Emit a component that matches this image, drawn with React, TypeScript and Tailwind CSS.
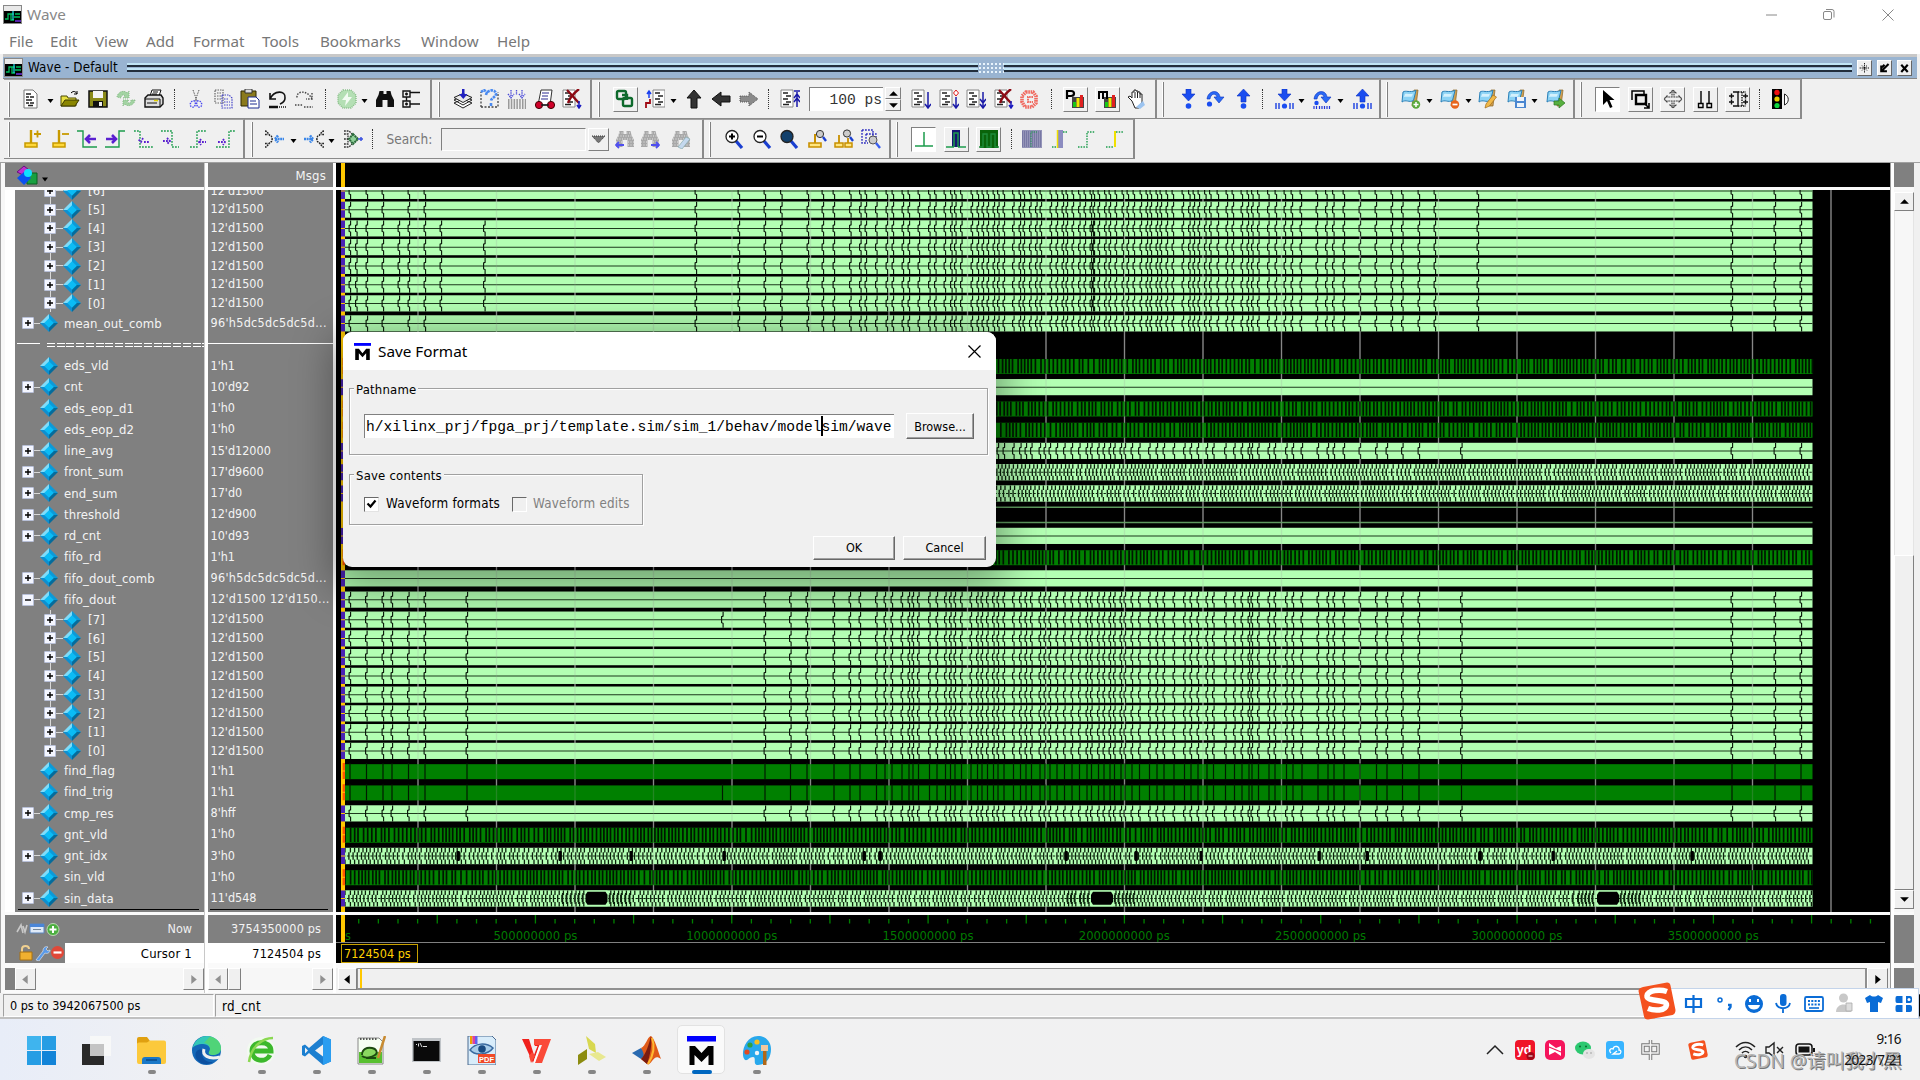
import React from "react";

/* ---------- signal data ---------- */

type Kind = "bus" | "dense" | "bit" | "bitOn" | "plain" | "thr" | "div" | "idx" | "sine";
type Row = {
  name: string;
  value: string;
  depth: 0 | 1;
  toggle?: "+" | "-";
  kind: Kind;
  set?: "A" | "A2" | "B" | "B2" | "M";
};

const child = (n: number, set: Row["set"]): Row => ({
  name: `[${n}]`,
  value: "12'd1500",
  depth: 1,
  toggle: "+",
  kind: "bus",
  set,
});

const ROWS: Row[] = [
  child(6, "A"),
  child(5, "A"),
  child(4, "A2"),
  child(3, "A2"),
  child(2, "A2"),
  child(1, "A2"),
  child(0, "A2"),
  { name: "mean_out_comb", value: "96'h5dc5dc5dc5d...", depth: 0, toggle: "+", kind: "bus", set: "A" },
  { name: "", value: "", depth: 0, kind: "div" },
  { name: "eds_vld", value: "1'h1", depth: 0, kind: "bitOn" },
  { name: "cnt", value: "10'd92", depth: 0, toggle: "+", kind: "plain" },
  { name: "eds_eop_d1", value: "1'h0", depth: 0, kind: "bit" },
  { name: "eds_eop_d2", value: "1'h0", depth: 0, kind: "bit" },
  { name: "line_avg", value: "15'd12000", depth: 0, toggle: "+", kind: "bus", set: "M" },
  { name: "front_sum", value: "17'd9600", depth: 0, toggle: "+", kind: "dense" },
  { name: "end_sum", value: "17'd0", depth: 0, toggle: "+", kind: "dense" },
  { name: "threshold", value: "12'd900", depth: 0, toggle: "+", kind: "thr" },
  { name: "rd_cnt", value: "10'd93", depth: 0, toggle: "+", kind: "plain" },
  { name: "fifo_rd", value: "1'h1", depth: 0, kind: "bitOn" },
  { name: "fifo_dout_comb", value: "96'h5dc5dc5dc5d...", depth: 0, toggle: "+", kind: "plain" },
  { name: "fifo_dout", value: "12'd1500 12'd150...", depth: 0, toggle: "-", kind: "bus", set: "B" },
  child(7, "B2"),
  child(6, "B"),
  child(5, "B"),
  child(4, "B"),
  child(3, "B"),
  child(2, "B"),
  child(1, "B"),
  child(0, "B"),
  { name: "find_flag", value: "1'h1", depth: 0, kind: "bitOn", set: "B" },
  { name: "find_trig", value: "1'h1", depth: 0, kind: "bitOn", set: "B2" },
  { name: "cmp_res", value: "8'hff", depth: 0, toggle: "+", kind: "bus", set: "B" },
  { name: "gnt_vld", value: "1'h0", depth: 0, kind: "bit" },
  { name: "gnt_idx", value: "3'h0", depth: 0, toggle: "+", kind: "idx" },
  { name: "sin_vld", value: "1'h0", depth: 0, kind: "bit" },
  { name: "sin_data", value: "11'd548", depth: 0, toggle: "+", kind: "sine" },
];

const A = [
  350, 367, 383, 409, 425, 696, 739, 765, 781.5, 808, 823, 834, 850.5, 860.5, 866, 876.5, 887, 893, 903, 909, 919,
  929.5, 935.5, 945, 951.5, 955.5, 961.5, 972, 978, 983, 988, 994, 998.5, 1004, 1013.5, 1020, 1024, 1030.5, 1036.5,
  1041, 1051, 1057, 1063, 1067, 1073, 1079.5, 1085, 1091, 1094, 1099, 1105.5, 1110, 1116, 1123, 1128, 1134, 1141, 1147,
  1151, 1157, 1161, 1167, 1173, 1183, 1189.5, 1194, 1199, 1205.5, 1210.5, 1218, 1227, 1233, 1242, 1248, 1252.5, 1258.5,
  1268.5, 1276, 1285, 1292, 1301, 1317, 1326.5, 1333.5, 1344, 1360, 1376, 1392, 1402.5, 1419, 1435, 1478, 1732, 1775,
  1801,
];
const B = [
  350, 366.5, 383, 392, 408.5, 425, 467, 765, 790.5, 807, 834, 850, 860, 876.5, 885, 892, 902, 909, 913, 918.5, 929.5,
  937, 945.5, 950.5, 955, 961.5, 971, 977.5, 982, 987.5, 993.5, 998, 1004, 1013.5, 1020.5, 1026, 1031.5, 1040, 1045,
  1050, 1057, 1064.5, 1072, 1079.5, 1087, 1091.5, 1098.5, 1104, 1110, 1114.5, 1121, 1125, 1132, 1139.5, 1149.5, 1157,
  1164, 1174, 1184.5, 1191, 1198, 1207, 1213.5, 1225.5, 1234.5, 1242, 1249, 1252, 1258.5, 1269, 1275, 1286.5, 1293,
  1302, 1318, 1328, 1334, 1344, 1360, 1376.5, 1387, 1402.5, 1419, 1461.5, 1732, 1775, 1801,
];
const SETS: Record<string, number[]> = {
  A,
  A2: [...A, 356.5, 399, 441, 484.5, 1093],
  B,
  B2: [...B, 722.5],
  M: B,
};

const TOP = 190;
const FIRST = 181.6;
const END = 1812.5;
const START = 343;

const LAYOUT = (() => {
  let y = FIRST;
  return ROWS.map((r) => {
    const h = r.depth === 1 ? 18.75 : 21.25;
    const c = y + h / 2;
    y += h;
    return { row: r, c };
  });
})();

const LIGHT = "#b3ffb3";
const T = "font-['DejaVu_Sans_Condensed','Noto_Sans',sans-serif]";

function rand(seed: number) {
  let s = seed;
  return () => {
    s = (s * 16807) % 2147483647;
    return s / 2147483647;
  };
}

/* ---------- waveform drawing ---------- */

function busPath(xs: number[], c: number) {
  return xs
    .map((x) => `M${x + 0.6} ${c - 8}V${c - 3.6}L${x - 0.9} ${c - 3}V${c + 3}L${x + 0.6} ${c + 3.6}V${c + 8}`)
    .join("");
}

function Trace({ row, c, i }: { row: Row; c: number; i: number }) {
  const w = END - START;
  if (row.kind === "div") return null;
  if (row.kind === "thr")
    return <path d={`M${START} ${c - 7.6}H${END}M${START} ${c + 7.8}H${END}`} stroke="#5f9a5f" strokeWidth="1.5" />;
  if (row.kind === "plain" || row.kind === "bus")
    return (
      <g>
        <rect x={START} y={c - 8.2} width={w} height={16.2} fill={LIGHT} />
        <path d={`M${START} ${c}H${END}`} stroke="#1d3a1d" strokeWidth="1.2" />
        {row.kind === "bus" && <path d={busPath(SETS[row.set!], c)} stroke="#061206" strokeWidth="1.1" fill="none" />}
      </g>
    );
  const rnd = rand(97 + i * 131);
  if (row.kind === "bit" || row.kind === "bitOn") {
    if (row.set)
      return (
        <g>
          <rect x={START} y={c - 6.8} width={w} height={15} fill="#008000" />
          <path d={SETS[row.set].map((x) => `M${x} ${c - 8}v16.2`).join("")} stroke="#001a00" strokeWidth="1.2" />
        </g>
      );
    let d = "";
    for (let x = START + 2; x < END; x += rnd() < 0.12 ? 5.6 : rnd() < 0.5 ? 3.3 : 4.1)
      d += `M${x.toFixed(1)} ${c - 7}v14.2`;
    return (
      <g>
        <rect x={START} y={c - 7} width={w} height={15} fill="#008000" />
        <path d={d} stroke="#001400" strokeWidth="1.7" />
      </g>
    );
  }
  let d = "";
  let m = "";
  const blobs = [596.5, 1102, 1608];
  const idxBlobs = [458, 560, 631, 724, 864, 880, 1066, 1136, 1201, 1319, 1367, 1480, 1553, 1692];
  for (let x = START + 2; x < END; x += rnd() < 0.14 ? 5.4 : rnd() < 0.5 ? 3.6 : 4.2) {
    const near = row.kind === "sine" ? Math.min(...blobs.map((b) => Math.abs(b - x))) : 99;
    if (near < 11) continue;
    d += `M${x.toFixed(1)} ${c - 8}v4.4M${x.toFixed(1)} ${c + 3.6}v4.4`;
    m += `M${(x - 1.5).toFixed(1)} ${c - 3.8}v7.6`;
    if (near < 36) m += `M${(x - 0.8).toFixed(1)} ${c - 5.5}v11`;
  }
  return (
    <g>
      <rect x={START} y={c - 8.2} width={w} height={16.4} fill={LIGHT} />
      <path d={d} stroke="#0a1f0a" strokeWidth="1.3" />
      <path d={m} stroke="#0a1f0a" strokeWidth="1.3" />
      <path d={`M${START} ${c}H${END}`} stroke="#0f280f" strokeWidth="1.2" strokeDasharray="2.4 1.5" />
      {row.kind === "sine" &&
        blobs.map((b) => (
          <g key={b}>
            <rect x={b - 11} y={c - 8} width="22" height="15.8" fill={LIGHT} />
            <path d={`M${b - 9} ${c - 6.8}h18l2 3v7l-2 3h-18l-2 -3v-7z`} fill="#000" />
          </g>
        ))}
      {row.kind === "idx" &&
        idxBlobs.map((b) => <rect key={b} x={b - 1.5} y={c - 5} width="3.4" height="10" rx="1" fill="#000" />)}
    </g>
  );
}

function WaveCanvas() {
  const grid = Array.from({ length: 19 }, (_, i) => 418 + i * 78.5);
  return (
    <svg className="block h-[722px] w-[1554px] bg-black" viewBox={`336 ${TOP} 1554 722`}>
      <path d={grid.map((x) => `M${x} 190V912`).join("")} stroke="#808080" strokeWidth="1.3" />
      {LAYOUT.map(({ row, c }, i) => (
        <Trace key={i} row={row} c={c} i={i} />
      ))}
      <path d={grid.map((x) => `M${x} 190V912`).join("")} stroke="#a0a0a0" strokeWidth="1.3" opacity="0.22" />
      <rect x="341" y="190" width="4" height="722" fill="#ffc800" />
      {LAYOUT.map(({ row, c }, i) => {
        if (row.kind === "div" || row.kind === "thr") return null;
        const bit = row.kind.startsWith("bit");
        return (
          <rect
            key={i}
            x={bit ? 342.6 : 341}
            y={c - 8}
            width={bit ? 2.4 : 4}
            height="16"
            fill={bit ? "#ff5500" : "#4a23b4"}
          />
        );
      })}
      <path
        d={LAYOUT.filter((l) => l.row.kind !== "div")
          .map(({ c }) => `M341 ${c}h4`)
          .join("")}
        stroke="#ffc800"
        strokeWidth="1.2"
      />
    </svg>
  );
}

function Ruler() {
  const ticks = Array.from({ length: 78 }, (_, i) => i + 1);
  return (
    <svg className="block h-[28px] w-[1554px] bg-black" viewBox="336 915 1554 28">
      <path
        d={ticks.map((i) => `M${339.1 + i * 19.633} ${i % 5 === 0 ? 915 : 919}V923.5`).join("")}
        stroke="#008000"
        strokeWidth="1.3"
      />
      <g className={T} fill="#007a00" fontSize="12.5" textAnchor="middle">
        <text x="348" y="939.5">
          s
        </text>
        {[1, 2, 3, 4, 5, 6, 7].map((k) => (
          <text key={k} x={339.1 + k * 196.3} y="939.5" textLength={k === 1 ? 84 : 91} lengthAdjust="spacingAndGlyphs">
            {k * 500000000} ps
          </text>
        ))}
      </g>
      <rect x="341" y="915" width="4" height="28" fill="#ffc800" />
      <rect x="336" y="942" width="1549" height="1" fill="#808080" />
    </svg>
  );
}

/* ---------- small parts ---------- */

const raised = "border border-t-white border-l-white border-r-[#808080] border-b-[#808080] bg-[#f0f0f0]";

function Diamond() {
  return (
    <svg className="block h-[18px] w-[18px] shrink-0" viewBox="0 0 18 18">
      <path d="M9 0L18 9L9 9Z" fill="#0c9ad8" />
      <path d="M9 0L0 9L9 9Z" fill="#7fdcfa" />
      <path d="M0 9L9 18V9Z" fill="#0e8fd0" />
      <path d="M18 9L9 18V9Z" fill="#056c9c" />
      <path d="M9 4.2L13.8 9L9 13.8L4.2 9Z" fill="#0bbcf5" />
    </svg>
  );
}

function Toggle({ s }: { s?: string }) {
  if (!s) return <span className="w-[12px] shrink-0" />;
  return (
    <span className="flex h-[12px] w-[12px] shrink-0 items-center justify-center rounded-[1px] border border-[#b8c0d8] bg-[#f4f6ff]">
      <svg className="h-[8px] w-[8px]" viewBox="0 0 8 8">
        <path d={s === "+" ? "M1 4H7M4 1V7" : "M1 4H7"} stroke="#000" strokeWidth="1.4" />
      </svg>
    </span>
  );
}

function Sep({ h }: { h: string }) {
  return <div className={`${h} shrink-0 bg-[#fafafa]`} />;
}

function ArrowBtn({ dir, dim, cls }: { dir: "l" | "r" | "u" | "d"; dim?: boolean; cls: string }) {
  const p = { l: "M7 1L2 5L7 9Z", r: "M3 1L8 5L3 9Z", u: "M1 7L5 3L9 7Z", d: "M1 3L5 7L9 3Z" }[dir];
  return (
    <div className={`flex shrink-0 items-center justify-center ${raised} ${cls}`}>
      <svg className="h-[11px] w-[11px] shrink-0" viewBox="0 0 10 10">
        <path d={p} fill={dim ? "#909090" : "#000"} />
      </svg>
    </div>
  );
}

/* ---------- toolbar icons ---------- */

const doc = (
  <g>
    <path d="M3 1h9l4 4v14H3z" fill="#fff" stroke="#777" />
    <path d="M5 5h5M5 8h3M9 8h4M5 11h6M5 14h3M9 14h4M7 16.5h5" stroke="#222" strokeWidth="1.3" />
  </g>
);
const docS = (
  <g>
    <path d="M1 1h12v17H1z" fill="#fff" stroke="#888" />
    <path d="M3 4h5M6 7h5M3 10h5M6 13h5M3 15.5h6" stroke="#222" strokeWidth="1.4" />
  </g>
);
const flag = (
  <g>
    <path d="M13 1h4l-2 16h-4z" fill="#d0a050" stroke="#8a6424" strokeWidth="0.7" />
    <path d="M2 3C5 1 8 4 15 1.500L12.500 11.500C8 14 5 10 1 13Z" fill="#8cd3f5" stroke="#2a80b8" />
    <path d="M4 5c3-1 5 1 8-0.500l-1 3c-3 1-5-0.500-8 0.500z" fill="#d4f1fd" />
  </g>
);
const bin = (c: string) => (
  <g fill={c}>
    <path d="M4.500 2h4v3h3V2h4l1 4l2.500 5v7h-6.500v-7h-5v7H1v-7l2.500-5z" />
    <path d="M8 6h4v5H8z" />
  </g>
);
const binDim = (
  <g>
    {bin("#a8a8a8")}
    <path d="M4 4h12M3 7h14M2 10h16M1 13h6M13 13h6M1 16h6M13 16h6" stroke="#e8e8e8" strokeDasharray="1 1.5" />
  </g>
);
const lens = (fill: string, sign: string) => (
  <g>
    <path d="M12 12L18 19" stroke="#1a3fd0" strokeWidth="3.2" />
    <circle cx="8" cy="7.5" r="6" fill={fill} stroke="#222" strokeWidth="1.3" />
    <path d={sign} stroke="#000" strokeWidth="2" />
  </g>
);
const blueDown = <path d="M8 0h5v5h4l-6.500 7L4 5h4z" fill="#1a4df0" stroke="#0a2fc0" strokeWidth="0.6" />;
const blueUp = <path d="M8 13h5V7h4L10.500 0L4 7h4z" fill="#1a4df0" stroke="#0a2fc0" strokeWidth="0.6" />;
const hop = (
  <path
    d="M2 10C3 1 14 0 15 8h4l-5 6l-5-6h3C11 4 6 4 5 10z"
    fill="#2a6af5"
    stroke="#0a2fc0"
    strokeWidth="0.6"
  />
);
const chk = (
  <path
    d="M2 17v3M4.500 17v3M10 17v3M7.500 17v3M12.500 17v3M15 17v3M17.500 17v3"
    stroke="#2238d8"
    strokeWidth="1.2"
  />
);
const bars = (
  <g>
    <path d="M7 8h12v11H7z" fill="#444" />
    <path d="M8 13h3v5H8z" fill="#18c818" />
    <path d="M11.500 9h3v9h-3z" fill="#f5e400" />
    <path d="M15 6h3v12h-3z" fill="#e02020" />
  </g>
);
const G = "#1c9c4c";
const P = "#5a20d0";

const I: Record<string, React.ReactNode> = {
  doc,
  open: (
    <g>
      <path d="M1 17V7h6l1 2h8v8z" fill="#e8e040" stroke="#4a4800" />
      <path d="M1 17L5 11h14l-4 6z" fill="#8a8600" stroke="#3a3800" />
      <path d="M11 4c3-3 5-1 6 1M17 5V2M17 5h-3" stroke="#000" fill="none" />
    </g>
  ),
  save: (
    <g>
      <path d="M1 2h18v16H1z" fill="#8a8a18" stroke="#111" strokeWidth="1.5" />
      <path d="M5 2h10v7H5z" fill="#f4f4f4" />
      <path d="M5 12h10v6H5z" fill="#111" />
      <path d="M11 13h3v4h-3z" fill="#eee" />
    </g>
  ),
  refresh: (
    <g fill="#a2d3a2" stroke="#86b986" strokeDasharray="1 1">
      <path d="M1 8C2 2 9 1 11 4l2-2v7H7l2-2C7 5 5 6 5 9z" />
      <path d="M19 11c-1 6-8 7-10 4l-2 2v-6h6l-2 2c2 2 4 1 4-2z" />
    </g>
  ),
  print: (
    <g>
      <path d="M6 7L8 1h9l-2 6" fill="#fff" stroke="#111" />
      <path d="M1 9l3-3h13l2 3v6l-3 3H1z" fill="#ddd" stroke="#111" strokeWidth="1.4" />
      <path d="M1 10h15v8M3 14h10M9 3h5M8 5h5" stroke="#111" fill="none" />
      <path d="M10 11.500h4" stroke="#e0d000" strokeWidth="1.500" />
    </g>
  ),
  cut: (
    <g fill="none">
      <path d="M7 1l4 11M13 1L9 12" stroke="#555" strokeDasharray="1.500 1" />
      <path
        d="M9 12c-5-1-6 5-3 6s4-3 3-6M11 12c5-1 6 5 3 6s-4-3-3-6"
        stroke="#4a4af0"
        strokeDasharray="1.500 1"
        strokeWidth="1.400"
      />
    </g>
  ),
  copy: (
    <g fill="none" strokeDasharray="1.500 1" strokeWidth="1.200">
      <path d="M2 1h8v13H2zM4 4h4M4 7h4M4 10h4" stroke="#666" />
      <path d="M9 6h7l3 3v10H9zM11 10h5M11 13h6M11 16h6" stroke="#4040c8" />
    </g>
  ),
  paste: (
    <g>
      <path d="M1 2h15v15H1z" fill="#8a7a1c" stroke="#2e2800" />
      <path d="M5 0h7v4H5z" fill="#ddd" stroke="#333" />
      <path d="M8 8h8l3 3v8H8z" fill="#fff" stroke="#1a2a90" />
      <path d="M10 12h6M10 15h7" stroke="#1a2a90" />
    </g>
  ),
  undo: (
    <g fill="none" stroke="#111" strokeWidth="1.600">
      <path d="M2 4v6h6M2 10C6 1 18 1 17 9c0 4-3 5-5 6" />
      <path d="M1 18h9" strokeWidth="2.500" />
      <path d="M11 18h8" strokeDasharray="1 1" />
    </g>
  ),
  redo: (
    <g fill="none" stroke="#444" strokeWidth="1.400" strokeDasharray="1.500 1.300">
      <path d="M18 4v6h-6M18 10C14 1 2 1 3 9M1 16h8M10 18h9" />
    </g>
  ),
  green: (
    <g>
      <path
        d="M6 1h8l5 5v8l-5 5H6l-5-5V6z"
        fill="#b4dfb4"
        stroke="#8cc08c"
        strokeWidth="1.500"
        strokeDasharray="1 1"
      />
      <path d="M11 3L5 11h4l-1 6l7-9h-4z" fill="#f2fbf2" />
    </g>
  ),
  bino: bin("#111"),
  tree: (
    <g fill="none" stroke="#111" strokeWidth="1.400">
      <path d="M2 2h7v6H2zM2 12h7v6H2zM9 3.500h10M9 15h10M5.500 3.500v3M4 5h3M5.500 13.500v3M4 15h3M5.500 8v4" />
    </g>
  ),
  compile: (
    <g>
      <path d="M1 14l9-4l9 4l-9 5zM1 11l9-4l9 4l-9 5z" fill="#fff" stroke="#222" />
      <path d="M1 8.500l9-4l9 4l-9 5z" fill="#e8e8e8" stroke="#222" />
      <path d="M9 0h2.500v5h3l-4.200 5L6 5h3z" fill="#2020c0" />
    </g>
  ),
  compile2: (
    <g fill="none">
      <path d="M1 18V3M1 18h17V3" stroke="#444" strokeWidth="1.300" strokeDasharray="2 1.500" />
      <path d="M1 3l3-2l4 3M6 6c1-6 10-6 10-1c0 3-5 4-5 7" stroke="#4a8af0" strokeWidth="2.600" strokeDasharray="2.500 0.800" />
      <path d="M11 14v3" stroke="#4a8af0" strokeWidth="2.600" />
    </g>
  ),
  compile3: (
    <g fill="none">
      <path
        d="M4 1v8M15 1v8M1 5l3 4l3-4M12 5l3 4l3-4M9.500 1v5"
        stroke="#4a4ad8"
        strokeWidth="1.300"
        strokeDasharray="1.500 0.800"
      />
      <path d="M1 11h18M1 13h18M1 15h18M1 17h18M1 19h18" stroke="#444" strokeDasharray="1.500 1.300" />
    </g>
  ),
  sim: (
    <g>
      <path d="M6 1h11l-2 15H3z" fill="#fff" stroke="#333" />
      <path d="M7 4h7M7 7h6M6 10h7" stroke="#2a2a90" />
      <circle cx="4" cy="16" r="3.600" fill="#d0002a" stroke="#400" />
      <circle cx="16" cy="16" r="3.600" fill="#d0002a" stroke="#400" />
      <path d="M6 16h8" stroke="#222" strokeWidth="1.500" />
    </g>
  ),
  brk: (
    <g>
      {docS}
      <path d="M5 1c4 4 8 9 12 13M17 0C12 4 8 8 6 14" stroke="#8c0a14" strokeWidth="2.400" />
      <path d="M17 12v6M15 16l2 3l2-3" stroke="#1a1ac0" strokeWidth="1.500" fill="none" />
    </g>
  ),
  link: (
    <g fill="none" stroke="#0e6a2c" strokeWidth="2.400">
      <rect x="2" y="2" width="9" height="8" rx="1.500" />
      <rect x="8" y="9" width="9" height="8" rx="1.500" />
      <path d="M7 6h5v5" />
    </g>
  ),
  restart: (
    <g>
      <g transform="translate(7 0)">{docS}</g>
      <path d="M4 9V3M2 5l2-3l2 3" stroke="#1a3ff0" strokeWidth="1.500" fill="none" />
      <path d="M5 10v4H1v5" stroke="#a00a14" strokeWidth="1.800" fill="none" />
    </g>
  ),
  up: <path d="M7 19V9H3L10 1l7 8h-4v10z" fill="#333" stroke="#111" />,
  left: <path d="M19 7v6h-9v4L1 10l9-7v4z" fill="#333" stroke="#111" />,
  right: <path d="M1 7v6h9v4l9-7l-9-7v4z" fill="#8a8a8a" stroke="#555" strokeDasharray="1 1" />,
  run0: (
    <g>
      {docS}
      <path d="M17 18V3M14 2h6M14 9l3-4l3 4M14 13l3-4l3 4" stroke="#1a1aa8" strokeWidth="1.500" fill="none" />
    </g>
  ),
  run1: (
    <g>
      {docS}
      <path d="M17 3v15M14 15l3 4l3-4" stroke="#1a1aa8" strokeWidth="1.500" fill="none" />
    </g>
  ),
  run2: (
    <g>
      {docS}
      <path d="M17 8v10M14 15l3 4l3-4" stroke="#1a1aa8" strokeWidth="1.500" fill="none" />
      <path d="M17 1l2.500 3L17 7l-2.500-3z" stroke="#e01818" fill="#fff" />
    </g>
  ),
  run3: (
    <g>
      {docS}
      <path d="M17 3v15M14 15l3 4l3-4M14 10l3 4l3-4" stroke="#1a1aa8" strokeWidth="1.500" fill="none" />
    </g>
  ),
  stop: (
    <g fill="none" stroke="#f06a60" strokeWidth="3.600" strokeDasharray="1.600 0.700">
      <path d="M7 3h7l3 4v7l-4 4H6l-3-5V7z" />
      <path d="M14 8H9v5h5" strokeWidth="2" />
    </g>
  ),
  perfP: (
    <g>
      {bars}
      <path d="M2 10V2h4c4 0 4 5 0 5H3" stroke="#000" strokeWidth="2.200" fill="none" />
    </g>
  ),
  perfM: (
    <g>
      {bars}
      <path d="M2 10V3h8v7M6 3v7" stroke="#000" strokeWidth="2" fill="none" />
    </g>
  ),
  hand: (
    <g>
      <path d="M6 12L2 8l2-1l2 2V3h2V1h2v1h2v1h2v2h2v8l-3 6H9z" fill="#fff" stroke="#222" />
      <path d="M9 9V3M11.500 9V3M14 9V4" stroke="#222" />
      <path d="M10 18L17 12l2 4l-5 4z" fill="#9cc4f0" />
    </g>
  ),
  stepIn: (
    <g>
      {blueDown}
      <circle cx="10.500" cy="17" r="2.800" fill="#1a4df0" />
    </g>
  ),
  stepOver: (
    <g>
      {hop}
      <circle cx="4.500" cy="15" r="2.600" fill="#1a4df0" />
    </g>
  ),
  stepOut: (
    <g>
      {blueUp}
      <circle cx="10.500" cy="17" r="2.800" fill="#1a4df0" />
    </g>
  ),
  stepIn2: (
    <g>
      {blueDown}
      <path d="M2 14v6M5 14v6M16 14v6M19 14v6" stroke="#1a3fe0" strokeWidth="1.400" />
      <circle cx="10.500" cy="17" r="2.600" fill="#1a4df0" />
    </g>
  ),
  stepOver2: (
    <g>
      {hop}
      <circle cx="4.500" cy="14" r="2.200" fill="#1a4df0" />
      {chk}
    </g>
  ),
  stepOut2: (
    <g>
      {blueUp}
      <path d="M2 14v6M5 14v6M16 14v6M19 14v6" stroke="#1a3fe0" strokeWidth="1.400" />
      <circle cx="10.500" cy="17" r="2.600" fill="#1a4df0" />
    </g>
  ),
  bmAdd: (
    <g>
      {flag}
      <circle cx="15" cy="15.500" r="4.200" fill="#5aa83c" />
      <path d="M15 13v5M12.500 15.500h5" stroke="#fff" strokeWidth="1.500" />
    </g>
  ),
  bmDel: (
    <g>
      {flag}
      <circle cx="15" cy="15.500" r="4.200" fill="#e8641c" />
      <path d="M12.500 15.500h5" stroke="#fff" strokeWidth="1.700" />
    </g>
  ),
  bmEdit: (
    <g>
      {flag}
      <path d="M7 19l1-4l7-9l3.500 2l-7 9z" fill="#f0b848" stroke="#a06a18" strokeWidth="0.700" />
    </g>
  ),
  bmSave: (
    <g>
      {flag}
      <path d="M8 8h11v11H8z" fill="#4a86d0" />
      <path d="M10 8h7v4h-7zM10 14h7v4h-7z" fill="#eef4fb" />
    </g>
  ),
  bmGo: (
    <g>
      {flag}
      <path d="M8 12h5V9l6 5l-6 5v-3H8z" fill="#58b040" stroke="#2c7a20" strokeWidth="0.700" />
    </g>
  ),
  ptr: <path d="M6 1v15l4-4l3 7l2.500-1l-3-7h5z" fill="#000" />,
  zoomSel: (
    <g fill="none" stroke="#000">
      <path d="M2 11V2h12v3" strokeWidth="1.500" />
      <path d="M6 6h10v9H6z" strokeWidth="2.400" />
      <path d="M14 14l5 5M19 14v5h-5" strokeWidth="1.600" />
    </g>
  ),
  pan: (
    <g fill="none" stroke="#444" strokeWidth="1.200">
      <path
        d="M9 2v6H2M11 2v6h7M9 18v-6H2M11 18v-6h7M6.500 4.500L10 1l3.500 3.500M6.500 15.500L10 19l3.500-3.500M4.500 6.500L1 10l3.500 3.500M15.500 6.500L19 10l-3.500 3.500"
        strokeDasharray="2 0.600"
      />
    </g>
  ),
  two: (
    <g fill="none" stroke="#000" strokeWidth="1.400">
      <path d="M6 2v12M14 2v12M3.500 14.500h4.500v4H3.500zM12 14.500h4.500v4H12z" />
    </g>
  ),
  edit: (
    <g fill="none" stroke="#111" strokeWidth="1.400">
      <path d="M5 3h5v14H5" />
      <path d="M14 3v14M10 3h8M10 17h8" strokeDasharray="1.500 1" />
      <path d="M1 7h5M3.500 4.500v5M1 13h5M3.500 10.500v5M15 7h5M17.500 4.500v5M15 13h5M17.500 10.500v5" />
    </g>
  ),
  light: (
    <g>
      <path d="M2 0h10v20H2z" fill="#000" />
      <circle cx="7" cy="3.500" r="2.700" fill="#f01010" />
      <circle cx="7" cy="10" r="2.600" fill="#e8d000" />
      <circle cx="7" cy="16.500" r="2.600" fill="#10d840" />
      <path d="M14.500 5v11c5-2 5-9 0-11z" fill="#fff" stroke="#222" />
    </g>
  ),
  /* cursor and edge tools */
  curAdd: (
    <g fill="none" stroke="#c89a00">
      <path d="M3 14h12v4H3z" fill="#ffd83a" strokeWidth="1.500" />
      <path d="M9 14V1" strokeWidth="2.400" />
      <path d="M12 5h7M15.500 1.500v7" strokeWidth="1.800" />
    </g>
  ),
  curDel: (
    <g fill="none" stroke="#c89a00">
      <path d="M3 14h12v4H3z" fill="#ffd83a" strokeWidth="1.500" />
      <path d="M9 14V1" strokeWidth="2.400" />
      <path d="M12 5h7" strokeWidth="1.800" />
    </g>
  ),
  prevT: (
    <g fill="none">
      <path d="M0 2h6v16h14" stroke={G} strokeWidth="1.400" />
      <path d="M9 10h10M13 6l-4 4l4 4" stroke={P} strokeWidth="2.600" />
    </g>
  ),
  nextT: (
    <g fill="none">
      <path d="M0 18h14V2h6" stroke={G} strokeWidth="1.400" />
      <path d="M1 10h10M7 6l4 4l-4 4" stroke={P} strokeWidth="2.600" />
    </g>
  ),
  e1: (
    <g fill="none" strokeDasharray="1.800 1.200">
      <path d="M1 2h6v16h13" stroke={G} strokeWidth="1.400" />
      <path d="M10 9l-2 4l-3-3M11 13h6" stroke={P} strokeWidth="1.800" />
    </g>
  ),
  e2: (
    <g fill="none" strokeDasharray="1.800 1.200">
      <path d="M1 2h11v16h7" stroke={G} strokeWidth="1.400" />
      <path d="M3 12h7M7 9l3 3l-3 3" stroke={P} strokeWidth="1.800" />
    </g>
  ),
  e3: (
    <g fill="none" strokeDasharray="1.800 1.200">
      <path d="M1 18h7V2h10" stroke={G} strokeWidth="1.400" />
      <path d="M10 13h7M12 10l-2 3l2 3" stroke={P} strokeWidth="1.800" />
    </g>
  ),
  e4: (
    <g fill="none" strokeDasharray="1.800 1.200">
      <path d="M1 18h13V2h6" stroke={G} strokeWidth="1.400" />
      <path d="M3 13h7M8 10l2 3l-2 3" stroke={P} strokeWidth="1.800" />
    </g>
  ),
  x1: (
    <g fill="none">
      <path
        d="M1 2c3 0 3 4 6 5c1.500 1 1.500 5 0 6c-3 1-3 5-6 5M1 5.500h3M1 14.500h3"
        stroke="#222"
        strokeWidth="1.500"
        strokeDasharray="1.800 0.800"
      />
      <path d="M11 10h9M14 6.500L11 10l3 3.500" stroke="#3a86e8" strokeWidth="2.600" strokeDasharray="2 0.600" />
    </g>
  ),
  x2: (
    <g fill="none">
      <path
        d="M20 2c-3 0-3 4-6 5c-1.500 1-1.500 5 0 6c3 1 3 5 6 5M20 5.500h-3M20 14.500h-3"
        stroke="#222"
        strokeWidth="1.500"
        strokeDasharray="1.800 0.800"
      />
      <path d="M0 10h9M6 6.500L9 10l-3 3.500" stroke="#3a86e8" strokeWidth="2.600" strokeDasharray="2 0.600" />
    </g>
  ),
  x3: (
    <g fill="none">
      <path
        d="M1 2h5l3 3M1 5h4v5M1 10h5M1 18h5l3-3M1 15h4v-5"
        stroke="#333"
        strokeWidth="1.300"
        strokeDasharray="1.800 0.900"
      />
      <path
        d="M10 5l5 5l-5 5l-4-5z"
        stroke="#2a6a3a"
        strokeWidth="2"
        fill="#8fcf98"
        strokeDasharray="2 0.500"
      />
      <path d="M15 10h5M18 8v4" stroke="#3a50e0" strokeWidth="1.500" />
    </g>
  ),
  f1: (
    <g>
      {binDim}
      <path d="M1 16h8M4 13l-3 3l3 3" stroke="#5050f0" strokeWidth="1.800" fill="none" />
    </g>
  ),
  f2: (
    <g>
      {binDim}
      <path d="M11 16h8M16 13l3 3l-3 3" stroke="#5050f0" strokeWidth="1.800" fill="none" />
    </g>
  ),
  f3: (
    <g>
      {binDim}
      <path d="M7 18L15 8l4 2l-8 10z" fill="#c4d8ee" stroke="#8aa" strokeWidth="0.700" />
    </g>
  ),
  zin: lens("#fff", "M5 7.500h6M8 4.500v6"),
  zout: lens("#fff", "M5 7.500h6"),
  zfull: lens("#12406c", ""),
  zcur: (
    <g fill="none">
      <path d="M2 14h12v4H2z" stroke="#c89000" fill="#ffe680" strokeWidth="1.600" />
      <path d="M8 14V5" stroke="#c89000" strokeWidth="2" />
      <circle cx="13" cy="5" r="3.600" fill="#ccc" stroke="#333" />
      <path d="M16 8l3 4" stroke="#1a3fd0" strokeWidth="2.400" />
    </g>
  ),
  zcur2: (
    <g fill="none">
      <path d="M1 14h8v4H1zM11 14h7v4h-7z" stroke="#c89000" fill="#ffe680" strokeWidth="1.500" />
      <path d="M5 14V6M14 14V9" stroke="#c89000" strokeWidth="1.800" />
      <circle cx="13" cy="4.500" r="3.600" fill="#ccc" stroke="#333" />
      <path d="M16 8l3 4" stroke="#1a3fd0" strokeWidth="2.400" />
    </g>
  ),
  zsel: (
    <g fill="none">
      <path d="M1 1h11v6M1 1v13h6M5 5v9M5 5h10v3" stroke="#2c2cc0" strokeWidth="1.400" strokeDasharray="1.800 1.200" />
      <circle cx="12" cy="11" r="4" fill="#ccc" stroke="#555" />
      <path d="M15 14l4 5" stroke="#3a5ff0" strokeWidth="2.400" />
    </g>
  ),
  w1: <path d="M1 17h18M10 17V3" stroke={G} strokeWidth="1.500" />,
  w2: (
    <g>
      <path d="M6 1h8v17H6z" fill="#161672" />
      <path d="M0 18h8M12 18h8M8 18V4h4v14" stroke={G} strokeWidth="1.500" fill="none" />
    </g>
  ),
  w3: (
    <g>
      <path d="M1 1h18v18H1z" fill="#0a640a" />
      <path d="M0 18h4V5h4v13h4V5h4v13h4" stroke="#1f8c3a" strokeWidth="1.400" fill="none" />
    </g>
  ),
  w4: (
    <g>
      <path d="M0 1h20v18H0z" fill="#9494b8" />
      <path d="M0 3h20M0 5h20M0 7h20M0 9h20M0 11h20M0 13h20M0 15h20M0 17h20" stroke="#5c5c90" strokeDasharray="1 1" />
      <path d="M9 18V3h6" stroke={G} strokeDasharray="1.500 1" fill="none" />
    </g>
  ),
  w5: (
    <g fill="none">
      <path d="M8 1h5v18H8z" fill="#8c8cc0" />
      <path d="M2 18h5M13 3h5" stroke={G} strokeWidth="1.300" strokeDasharray="1.500 1" />
      <path d="M7.500 1v18" stroke="#f0e000" strokeWidth="1.500" />
    </g>
  ),
  w6: <path d="M1 18h9V3h8" stroke={G} strokeWidth="1.400" strokeDasharray="1.500 1.200" fill="none" />,
  w7: (
    <g fill="none">
      <path d="M1 18h8M11 3h8" stroke={G} strokeWidth="1.400" strokeDasharray="1.500 1.200" />
      <path d="M10 2v16" stroke="#f0e000" strokeWidth="2" />
    </g>
  ),
};

/* kind of toolbar slot, its centre, and whether it is a raised or pressed button */
type Slot = [string, number, ("btn" | "in" | undefined)?];

const SLOT_W: Record<string, number> = { "|": 2, h: 2, v: 9, num: 74, spin: 16, "Search:": 48, field: 145, drop: 21 };

function ToolGroup({ x, end, slots }: { x: number; end: number; slots: Slot[] }) {
  let cursor = x;
  return (
    <div
      className="flex h-[40px] shrink-0 items-center border-t border-r-2 border-b border-t-[#a0a0a0] border-r-[#8a8a8a] border-b-[#8a8a8a]"
      style={{ width: end - x }}
    >
      {slots.map(([k, c, v], i) => {
        const w = SLOT_W[k] ?? (v ? 25 : 22);
        const ml = c - w / 2 - cursor;
        cursor = c + w / 2;
        const st = { marginLeft: ml, width: w };
        if (k === "h")
          return (
            <div
              key={i}
              className="-mb-px h-[35px] shrink-0 border-r border-l border-r-[#808080] border-l-white"
              style={st}
            />
          );
        if (k === "|")
          return <div key={i} className="h-[20px] shrink-0 border-l-[1.5px] border-dotted border-[#333]" style={st} />;
        if (k === "v")
          return (
            <svg key={i} className="mt-[4px] h-[6px] shrink-0" style={st} viewBox="0 0 9 6">
              <path d="M1.500 1H7.500L4.500 5Z" fill="#000" />
            </svg>
          );
        if (k === "num")
          return (
            <div
              key={i}
              className="flex h-[24px] shrink-0 items-center justify-end border-t border-l border-[#808080] bg-white pt-[3px] pr-[1px] font-['Liberation_Mono'] text-[14.600px] text-[#333]"
              style={st}
            >
              100 ps
            </div>
          );
        if (k === "spin")
          return (
            <div key={i} className="flex h-[24px] shrink-0 flex-col" style={st}>
              <ArrowBtn dir="u" cls="h-[12px] w-full" />
              <ArrowBtn dir="d" cls="h-[12px] w-full" />
            </div>
          );
        if (k === "Search:")
          return (
            <div key={i} className={`shrink-0 ${T} text-[13.500px] whitespace-nowrap text-[#777]`} style={st}>
              Search:
            </div>
          );
        if (k === "field")
          return (
            <div
              key={i}
              className="h-[23px] shrink-0 border border-t-[#808080] border-r-white border-b-white border-l-[#808080]"
              style={st}
            />
          );
        if (k === "drop")
          return (
            <div key={i} className={`flex h-[23px] shrink-0 items-center justify-center ${raised}`} style={st}>
              <svg className="h-[9px] w-[15px]" viewBox="0 0 15 9">
                <path d="M1 1H14L7.500 8Z" fill="#777" stroke="#333" strokeDasharray="1 1" />
              </svg>
            </div>
          );
        return (
          <div
            key={i}
            className={
              "flex h-[25px] shrink-0 items-center justify-center " +
              (v === "btn"
                ? raised
                : v === "in"
                  ? "border border-t-[#808080] border-r-white border-b-white border-l-[#808080] bg-white"
                  : "")
            }
            style={st}
          >
            <svg className="h-[20px] w-[20px] shrink-0" viewBox="0 0 20 20" fill="none">
              {I[k]}
            </svg>
          </div>
        );
      })}
    </div>
  );
}

function WaveLogo() {
  return (
    <svg className="h-[19px] w-[19px] shrink-0" viewBox="0 0 19 19">
      <rect x="0.500" y="0.500" width="18" height="18" fill="#e8e8e8" stroke="#888" />
      <rect x="1" y="6" width="17" height="12" fill="#000" />
      <path d="M2 14h3V9h3v6h3M11 12h6M12 9h5M8 9h3" stroke="#00c060" strokeWidth="1.300" fill="none" />
      <path d="M10 6v9" stroke="#20d0e0" strokeWidth="1.300" />
      <path d="M12 16h6" stroke="#7030e0" strokeWidth="1.500" />
    </svg>
  );
}

function MLogo({ cls }: { cls: string }) {
  return (
    <svg className={cls} viewBox="0 0 28 30" preserveAspectRatio="none">
      <rect x="0" y="0" width="28" height="5" fill="#0000ff" />
      <path d="M2 30V10h6l6 8l6-8h6v20h-6V18l-6 7l-6-7v12z" fill="#000" />
    </svg>
  );
}

/* ---------- columns ---------- */

function NamesColumn() {
  return (
    <div className="flex w-[199px] shrink-0 flex-col bg-[#808080]">
      <div className="flex h-[24px] items-center pl-[11px]">
        <svg className="h-[21px] w-[32px]" viewBox="0 0 32 21">
          <path d="M1 7L8 1l5 4l-6 5z" fill="#c030d0" stroke="#6a1080" />
          <path d="M11 8h10v11H11z" fill="#18a040" stroke="#0a6020" />
          <path d="M8 7l7 6l-7 7l-7-7z" fill="#0a50f0" />
          <circle cx="12" cy="8" r="4" fill="#10e0ff" />
          <path d="M26 12.500h6L29 16.500z" fill="#000" />
        </svg>
      </div>
      <Sep h="h-[3px]" />
      <div className="flex h-[722px]">
        <div className="w-[10px] shrink-0 bg-white" />
        <div className="relative h-full flex-1 overflow-hidden">
          <div className="absolute top-0 left-[35px] h-[122px] w-px bg-[#d8d8d8]" />
          <div className="absolute top-[420px] left-[35px] h-[145px] w-px bg-[#d8d8d8]" />
          <div className={`relative mt-[-8.4px] flex flex-col ${T} text-[13px] tracking-[0.1px] text-[#f4f4f4]`}>
            {ROWS.map((r, i) =>
              r.kind === "div" ? (
                <div key={i} className="flex h-[21.250px] items-center pl-[2px]">
                  <div className="mt-[-2px] h-px w-[23px] bg-white" />
                  <div className="ml-[7px] flex flex-1 flex-col gap-[2px]">
                    <div className="h-px bg-[repeating-linear-gradient(90deg,#fff_0_8px,transparent_8px_9.700px)]" />
                    <div className="h-px bg-[repeating-linear-gradient(90deg,#fff_0_8px,transparent_8px_9.700px)]" />
                  </div>
                </div>
              ) : (
                <div
                  key={i}
                  className={
                    r.depth ? "flex h-[18.750px] items-center pl-[29px]" : "flex h-[21.250px] items-center pl-[7px]"
                  }
                >
                  <Toggle s={r.toggle} />
                  <span
                    className={`h-px shrink-0 ${r.depth ? "w-[7px]" : "w-[6px]"} ${r.toggle ? "bg-[#d8d8d8]" : ""}`}
                  />
                  <Diamond />
                  <span className={`whitespace-nowrap ${r.depth ? "ml-[7px]" : "ml-[6px]"}`}>{r.name}</span>
                </div>
              ),
            )}
          </div>
          <div className="absolute top-[719px] left-[3px] h-px w-[181px] bg-black" />
        </div>
      </div>
      <Sep h="h-[3px]" />
      <div className="flex h-[28px] items-center justify-between pr-[12px] pl-[11px]">
        <svg className="h-[15px] w-[44px]" viewBox="0 0 44 15">
          <path d="M1 10L5 3l2 8M7 4l2 6l2-7" stroke="#c8c8c8" fill="none" strokeWidth="1.600" />
          <path d="M14 2h14v9H14z" fill="#dfeaf8" stroke="#5a86c0" />
          <path d="M14 2h14v3H14z" fill="#4a86d8" />
          <path d="M17 7.500h8" stroke="#789" />
          <circle cx="37" cy="7.500" r="6" fill="#4cae40" stroke="#cfe8c8" strokeWidth="0.800" />
          <path d="M37 4v7M33.500 7.500h7" stroke="#fff" strokeWidth="2" />
        </svg>
        <span className={`${T} text-[12.500px] text-[#f0f0f0]`}>Now</span>
      </div>
      <div className="flex h-[20px]">
        <div className="flex w-[60px] items-center pl-[13px]">
          <svg className="h-[16px] w-[46px]" viewBox="0 0 46 16">
            <path d="M4 7V4c0-4 7-4 7 0" stroke="#f0d090" fill="none" strokeWidth="2" />
            <path d="M2 7h12v8H2z" fill="#f0b030" stroke="#a87010" />
            <path
              d="M18 15l7-9c0-4 3-5 5-4l-2 2l2 2l2-1c0 3-3 4-5 3l-6 8z"
              fill="#5a9ae8"
              stroke="#eee"
              strokeWidth="0.600"
            />
            <circle cx="39.500" cy="7.500" r="6.500" fill="#e04838" />
            <path d="M35.500 7.500h8" stroke="#fff" strokeWidth="2.200" />
          </svg>
        </div>
        <div
          className={`flex flex-1 items-center justify-end bg-white pt-[2px] pr-[12px] ${T} text-[13px] tracking-[0.2px]`}
        >
          Cursor 1
        </div>
      </div>
      <Sep h="h-[5px]" />
      <div className="flex h-[22px] pl-[10px]">
        <ArrowBtn dir="l" dim cls="h-[22px] w-[21px]" />
        <div className="flex-1 bg-[#f7f7f7]" />
        <ArrowBtn dir="r" dim cls="h-[22px] w-[21px]" />
      </div>
      <Sep h="h-[3px]" />
    </div>
  );
}

function ValuesColumn() {
  return (
    <div className={`flex w-[125px] shrink-0 flex-col bg-[#808080] ${T} text-[12.500px] text-[#f4f4f4]`}>
      <div className="flex h-[24px] items-center justify-end pt-[2px] pr-[7px] text-[13px] tracking-[0.2px]">Msgs</div>
      <Sep h="h-[3px]" />
      <div className="relative h-[722px] overflow-hidden">
        <div className="mt-[-8.4px] flex flex-col">
          {ROWS.map((r, i) =>
            r.kind === "div" ? (
              <div key={i} className="flex h-[21.250px] items-center">
                <div className="mt-[-2px] h-px w-full bg-white" />
              </div>
            ) : (
              <div
                key={i}
                className={`flex items-center pl-[2.500px] whitespace-nowrap ${r.depth ? "h-[18.750px]" : "h-[21.250px]"} ${r.value.endsWith("...") ? "tracking-[0.3px]" : ""}`}
              >
                {r.value}
              </div>
            ),
          )}
        </div>
        <div className="absolute top-[719px] left-[2px] h-px w-[118px] bg-black" />
      </div>
      <Sep h="h-[3px]" />
      <div className="flex h-[28px] items-center justify-end pr-[12px] tracking-[0.15px]">3754350000 ps</div>
      <div className="flex h-[20px] items-center justify-end bg-white pt-[2px] pr-[12px] tracking-[0.2px] text-black">
        7124504 ps
      </div>
      <Sep h="h-[5px]" />
      <div className="flex h-[22px]">
        <ArrowBtn dir="l" dim cls="h-[22px] w-[20px]" />
        <div className={`w-[13px] ${raised}`} />
        <div className="flex-1 bg-[#f7f7f7]" />
        <ArrowBtn dir="r" dim cls="h-[22px] w-[21px]" />
      </div>
      <Sep h="h-[3px]" />
    </div>
  );
}

function WaveColumn() {
  return (
    <div className="flex w-[1554px] shrink-0 flex-col bg-black">
      <div className="h-[24px] pl-[5px]">
        <div className="h-full w-[4px] bg-[#ffc800]" />
      </div>
      <Sep h="h-[3px]" />
      <WaveCanvas />
      <Sep h="h-[3px]" />
      <Ruler />
      <div className="h-[20px] pt-px pl-[5px]">
        <div
          className={`flex h-[19px] w-[77px] items-center border-[1.500px] border-[#c8a000] pt-[2px] pl-[2px] ${T} text-[12.500px] whitespace-nowrap text-[#ffd000]`}
        >
          7124504 ps
        </div>
      </div>
      <Sep h="h-[5px]" />
      <div className="flex h-[22px] bg-[#f0f0f0] pr-[2px] pl-[2px]">
        <ArrowBtn dir="l" cls="h-[22px] w-[19px]" />
        <div className="flex-1 border border-r-2 border-b-2 border-[#909090] bg-[#f0f0f0] pl-[2px]">
          <div className="h-full w-[2px] bg-[#ffc800]" />
        </div>
        <ArrowBtn dir="r" cls="h-[22px] w-[21px]" />
      </div>
      <Sep h="h-[3px]" />
    </div>
  );
}

function ScrollColumn() {
  return (
    <div className="flex w-[20px] shrink-0 flex-col">
      <div className="h-[24px] bg-[#808080]" />
      <Sep h="h-[3px]" />
      <div className="flex h-[722px] flex-col bg-[#f7f7f7]">
        <ArrowBtn dir="u" cls="mt-[2px] h-[19px] w-[20px]" />
        <div className="h-[344px] border-x border-x-[#e4e4e4]" />
        <div className={`flex-1 ${raised}`} />
        <ArrowBtn dir="d" cls="mb-[3px] h-[19px] w-[20px]" />
      </div>
      <Sep h="h-[3px]" />
      <div className="h-[48px] bg-[#808080]" />
      <Sep h="h-[5px]" />
      <div className="h-[22px] bg-[#808080]" />
      <Sep h="h-[3px]" />
    </div>
  );
}

/* ---------- dialog ---------- */

function Fieldset({ label, cls, children }: { label: string; cls: string; children: React.ReactNode }) {
  return (
    <div className={`relative border border-[#a0a0a0] shadow-[inset_1px_1px_0_#fff,1px_1px_0_#fff] ${cls}`}>
      <span className="absolute top-[-8px] left-[4px] bg-[#f0f0f0] px-[2px] text-[13px] leading-[18px] tracking-[0.2px]">
        {label}
      </span>
      {children}
    </div>
  );
}

function Dialog() {
  const btn = `flex items-center justify-center border border-t-white border-l-white border-r-[#696969] border-b-[#696969] bg-[#f0f0f0] shadow-[inset_-1px_-1px_0_#a0a0a0]`;
  return (
    <div
      className={`absolute top-[332px] left-[343px] flex h-[235px] w-[653px] flex-col overflow-hidden rounded-[9px] bg-[#f0f0f0] ${T} text-[12.500px] text-black shadow-[0_12px_40px_10px_rgba(0,0,0,0.35)]`}
    >
      <div className="flex h-[38px] items-center bg-white pl-[11px]">
        <MLogo cls="h-[17px] w-[17px]" />
        <span className="ml-[7px] flex-1 font-['Noto_Sans'] text-[15.300px]">Save Format</span>
        <svg className="mr-[15px] h-[13px] w-[13px]" viewBox="0 0 13 13">
          <path d="M0.500 0.500l12 12M12.500 0.500l-12 12" stroke="#000" strokeWidth="1.200" />
        </svg>
      </div>
      <div className="flex flex-1 flex-col px-[6px] pt-[18px]">
        <Fieldset label="Pathname" cls="flex h-[67px] w-[639px] pt-[25px] pl-[14px]">
          <div className="relative flex h-[24px] w-[530px] items-center overflow-hidden border-t border-l border-[#808080] bg-white pt-[3px] pl-[1px] font-['Liberation_Mono'] text-[14.600px] whitespace-pre">
            h/xilinx_prj/fpga_prj/template.sim/sim_1/behav/modelsim/wave
            <div className="absolute top-[1px] left-[456px] h-[20px] w-[2px] bg-black" />
          </div>
          <div className={`mt-[-1px] ml-[12px] h-[26px] w-[68px] pt-[2px] ${btn}`}>Browse...</div>
        </Fieldset>
        <Fieldset label="Save contents" cls="mt-[19px] flex h-[51px] w-[294px] items-center pt-[9px] pl-[14px]">
          <div className="h-[15px] w-[15px] border border-t-[#696969] border-r-[#e3e3e3] border-b-[#e3e3e3] border-l-[#696969] bg-white">
            <svg className="h-full w-full" viewBox="0 0 13 13">
              <path d="M2.500 5.500l3 3l5-6" stroke="#000" strokeWidth="2.200" fill="none" />
            </svg>
          </div>
          <span className="ml-[7px] w-[126px] text-[13.300px] tracking-[0.22px] whitespace-nowrap">
            Waveform formats
          </span>
          <div className="h-[15px] w-[15px] border border-t-[#696969] border-r-white border-b-white border-l-[#696969]" />
          <span className="ml-[6px] text-[13.300px] tracking-[0.22px] whitespace-nowrap text-[#808080]">
            Waveform edits
          </span>
        </Fieldset>
        <div className="mt-[11px] flex justify-end gap-[8px] pr-[4px]">
          <div className={`h-[24px] w-[82px] pt-px ${btn}`}>OK</div>
          <div className={`h-[24px] w-[83px] pt-px ${btn}`}>Cancel</div>
        </div>
      </div>
    </div>
  );
}

/* ---------- taskbar ---------- */

function SLogo({ cls }: { cls: string }) {
  return (
    <svg className={cls} viewBox="0 0 38 38">
      <path
        d="M5 5L29 0.500q3 0 3.500 3L37.500 28q0 4-3 5L10 37.500q-3.500 0-4-3L0.500 9q0-3 4.500-4z"
        fill="#f4511e"
      />
      <path d="M29 9.500C22 7 10 8 9 14c-0.500 6 20 3 19.500 9c-1 6-12 6-18.500 3.500" stroke="#fff" strokeWidth="5.500" fill="none" />
    </svg>
  );
}

const TASK: React.ReactNode[] = [
  <g>
    <path d="M0 0h14v14H0zM15 0h14v14H15zM0 15h14v14H0zM15 15h14v14H15z" fill="#1384d8" />
    <path d="M0 0h14v14H0z" fill="#3fb4ee" />
    <path d="M15 0h14v14H15zM0 15h14v14H0z" fill="#269de4" />
  </g>,
  <g>
    <path d="M0 8h22v21H0z" fill="#2a2a2a" />
    <path d="M8 0h21v20H8z" fill="#f8f8f8" opacity="0.9" />
    <path d="M8 8h14v12H8z" fill="#c4c4c4" />
  </g>,
  <g>
    <path d="M0 3q0-2 2-2h8l3 4h14v10H0z" fill="#e0a010" />
    <path d="M0 8q0-1.500 2-1.500h8l3-2h14q2 0 2 2V26q0 2-2 2H2q-2 0-2-2z" fill="#fcc93c" />
    <path d="M5 28v-4q0-3 3-3h13q3 0 3 3v4z" fill="#1a78c8" />
    <path d="M9 24h11" stroke="#0a4a88" strokeWidth="1.500" />
  </g>,
  <g>
    <circle cx="14.500" cy="14.500" r="14.500" fill="#1468b8" />
    <path
      d="M0.500 12C3 3 10 0 15 0c8 0 14 6 14 12c0 5-4 7-8 7c-3 0-5-1-4-3c3-4-1-8-6-8C6 8 2 10 0.500 12z"
      fill="#34c8b8"
    />
    <path d="M18 0.500C25 2 29 7 29 12c0 5-4 7-8 7c-3 0-5-1-4-3c3-5-1-9-5-9z" fill="#5cd85c" opacity="0.700" />
    <path d="M11 14c-3 6 2 13 10 12c-6 4-14 2-17-4c-2-6 2-10 7-8z" fill="#0c50a0" />
    <path d="M12 13c-2 6 4 11 16 8" stroke="#f0f0f0" strokeWidth="3" fill="none" />
  </g>,
  <g fill="none">
    <circle cx="14" cy="15" r="14" fill="#f2faf0" />
    <path d="M6 15h18C24 4 5 4 5 15c0 11 14 12 18 4" stroke="#3cb82c" strokeWidth="5" />
    <path d="M2 26C4 10 16 2 26 2" stroke="#8ad850" strokeWidth="2.500" />
  </g>,
  <g>
    <path d="M21 0l8 3.500v22L21 29L7 17l-4 3.500L0 19v-9l3-1.500L7 12z" fill="#1c7fd0" />
    <path d="M21 8.500v12L13 14.500zM3 11.500v6L6 14.500z" fill="#f1f1f2" />
    <path d="M21 0l8 3.500v22L21 29z" fill="#2a9df0" />
  </g>,
  <g>
    <path d="M1 2h21l4 4v22H1z" fill="#f6fff2" stroke="#888" />
    <path d="M2 16h23v11H2z" fill="#58c030" />
    <path d="M5 19c0-6 5-8 10-7c5 1 6 5 3 7s-9 4-13 1M9 22h10" stroke="#1c4a10" strokeWidth="1.800" fill="#8ad860" />
    <path d="M28 0l-7 22" stroke="#c88a30" strokeWidth="2.500" />
    <path d="M3 3h18" stroke="#555" strokeDasharray="1.500 1.500" strokeWidth="2" />
  </g>,
  <g>
    <path d="M0 2h29v24H0z" fill="#c0c4c8" />
    <path d="M1.500 5h26v20h-26z" fill="#0a0a0a" />
    <path d="M4 8.500h1M6.500 7.500v3M8 7l2 4M11 10.500h4" stroke="#ddd" />
  </g>,
  <g>
    <path d="M1 0h24l4 4v25H1z" fill="#d8ecfa" stroke="#4a6a90" />
    <path d="M3 0h2.500v8H3z" fill="#f0a000" />
    <path d="M5.500 0H8v8H5.500z" fill="#e040a0" />
    <path d="M8 0h2.500v8H8z" fill="#6060f0" />
    <path d="M3 14c5-7 16-8 23-2c-5 7-18 8-23 2z" fill="#a8cdea" stroke="#3a6aa0" strokeWidth="1.500" />
    <circle cx="15" cy="13" r="3.800" fill="#1a4a80" />
    <path d="M11 18h17v9H11z" fill="#f04a28" />
    <text
      x="19.500"
      y="25.500"
      fontSize="7.500"
      fontWeight="bold"
      fill="#fff"
      textAnchor="middle"
      fontFamily="Liberation Sans"
    >
      PDF
    </text>
  </g>,
  <g>
    <path d="M0 3h7l5 16l3.500-9h-3l2-4h4L11 27z" fill="#f0201c" />
    <path d="M9 27L7 20l3-4l3 4zM13 27l7-18h-8V3h17l-9 24z" fill="#fa4a38" />
    <path d="M18 10l-6 17" stroke="#fff" strokeWidth="1.500" />
  </g>,
  <g>
    <path d="M9 0l9 8l1 9l-7-4z" fill="#d8d850" />
    <path d="M10 13v10L1 29V19z" fill="#8c8c10" />
    <path d="M12 18l9-2l8 5l-7 4z" fill="#e8e890" />
  </g>,
  <g>
    <path d="M0 17l9-5l6 6l-6 5z" fill="#2a6ab0" />
    <path d="M9 12C14 10 15 1 19 0c4 3 7 15 10 23c-4-3-6-2-9 2c-2 3-4 4-5 3l-6-5c4-3 3-6 0-11z" fill="#e05a18" />
    <path d="M19 0c1 10-1 20-4 28l-6-5c5-5 8-15 10-23z" fill="#7a1c10" />
    <path d="M20 2c3 8 1 18-4 26" stroke="#ffb830" strokeWidth="2" fill="none" />
  </g>,
  <g>
    <path d="M0 0h29v5.500H0z" fill="#0000ff" />
    <path d="M2.500 29V10H8l6.500 7L21 10h5.500v19h-5v-10l-7 7l-7-7v10z" fill="#000" />
  </g>,
  <g>
    <path d="M16 0c8 0 13 6 13 13c0 10-6 16-13 16c-6 0-1-8-5-8c-4 0-5 4-8 3C-2 20 2 0 16 0z" fill="#28a8ec" />
    <circle cx="15" cy="6" r="2.600" fill="#f8c020" />
    <circle cx="8" cy="9" r="2.600" fill="#30a040" />
    <circle cx="5" cy="16" r="2.600" fill="#e04a20" />
    <circle cx="15" cy="17" r="2.200" fill="#f0f4f8" />
    <path d="M19 9h7v6h-7z" fill="#f0c8a0" />
    <path d="M21 15h3.500v14H21z" fill="#b06818" />
  </g>,
];

function Taskbar() {
  return (
    <div className="flex h-[61px] shrink-0 items-center bg-[linear-gradient(90deg,#e8edf8_0%,#f1f1f2_12%,#f1f1f1_100%)] pt-px pl-[14px]">
      {TASK.map((t, i) => (
        <div key={i} className="relative flex h-[50px] w-[55px] shrink-0 items-center justify-center">
          {i === 12 && (
            <div className="absolute top-0 left-[3px] h-[49px] w-[48px] rounded-[5px] border border-[#e2e2e2] bg-[#fafafa]" />
          )}
          <svg className="relative h-[29px] w-[29px]" viewBox="0 0 29 29">
            {t}
          </svg>
          {i > 1 && i !== 3 && (
            <div
              className={
                i === 12
                  ? "absolute bottom-[1px] h-[4px] w-[20px] rounded-full bg-[#0067c0]"
                  : "absolute bottom-[1px] h-[4px] w-[8px] rounded-full bg-[#868686]"
              }
            />
          )}
        </div>
      ))}
      <div className="ml-[702px] flex h-full items-center">
        <svg className="h-[24px] w-[334px]" viewBox="1486 0 334 24" fill="none">
          <path d="M1487 16l8-8l8 8" stroke="#222" strokeWidth="1.500" />
          <rect x="1515" y="2" width="20" height="20" rx="4" fill="#f01428" />
          <text
            x="1524"
            y="15.500"
            fontSize="12.500"
            fontWeight="bold"
            fill="#fff"
            textAnchor="middle"
            fontFamily="Liberation Sans"
          >
            yd
          </text>
          <circle cx="1530.500" cy="18" r="4" fill="#a00818" />
          <path d="M1528.500 18h4" stroke="#fff" />
          <rect x="1545" y="2" width="20" height="20" rx="5" fill="#f5155c" />
          <path d="M1549 5l7 5l5-2v10l-6-4l-6 3z" fill="#fff" />
          <path d="M1549 9l12 5" stroke="#f5155c" strokeWidth="1.200" />
          <ellipse cx="1583" cy="10" rx="8" ry="6.500" fill="#2cc870" />
          <circle cx="1580" cy="8.500" r="1" fill="#0a6a30" />
          <circle cx="1586" cy="8.500" r="1" fill="#0a6a30" />
          <ellipse cx="1589" cy="16" rx="6" ry="5" fill="#e4e4e4" />
          <circle cx="1587" cy="15" r="0.800" fill="#999" />
          <circle cx="1591" cy="15" r="0.800" fill="#999" />
          <rect x="1606" y="3" width="18" height="18" rx="3" fill="#38b4ff" />
          <path d="M1611 15c-3-3 0-5 2-4c1-4 7-3 6 1c3 0 2 4 0 4h-6l4-3" stroke="#fff" strokeWidth="1.300" />
          <path d="M1643 7h15v8h-15zM1650.500 2v20" stroke="#777" strokeWidth="3.500" />
          <path d="M1643 7h15v8h-15zM1650.500 2v20" stroke="#f4f4f4" strokeWidth="1.500" />
          <path d="M1736 9c6-6 13-6 19 0M1739 12c4-4 9-4 13 0M1742 15c2-2 5-2 7 0" stroke="#222" strokeWidth="1.600" />
          <circle cx="1745.500" cy="18.500" r="1.800" fill="#222" />
          <path d="M1766 9h3l5-4v14l-5-4h-3zM1777 9l6 6M1783 9l-6 6" stroke="#222" strokeWidth="1.400" />
          <rect x="1796" y="6" width="16" height="11" rx="3" stroke="#111" strokeWidth="1.500" />
          <rect x="1798.500" y="8.500" width="11" height="6" fill="#111" />
          <path d="M1814 10v4" stroke="#111" strokeWidth="2" />
        </svg>
      </div>
    </div>
  );
}

function ImeBar() {
  const b = "#0a6cd6";
  return (
    <div className="absolute top-[988px] left-[1655px] h-[31px] w-[264px] border border-[#c4d4ea] bg-white">
      <svg className="block h-[29px] w-[262px]" viewBox="1656 989 262 29" fill="none">
        <path d="M1686 999h15v8h-15zM1693.500 995v18" stroke={b} strokeWidth="2.200" />
        <circle cx="1720" cy="1000" r="2" stroke={b} strokeWidth="1.500" />
        <path d="M1728 1005h2.500v2l-2 3" stroke={b} strokeWidth="2.400" />
        <circle cx="1754" cy="1004" r="9" fill={b} />
        <path d="M1750 999v3M1758 999v3" stroke="#fff" strokeWidth="2" />
        <path d="M1748 1005h12c-1 6-11 6-12 0z" fill="#fff" />
        <rect x="1780" y="994" width="6.500" height="12" rx="3" fill={b} />
        <path d="M1776 1003c1 7 13 7 14 0M1783 1009v4" stroke={b} strokeWidth="1.800" />
        <rect x="1805" y="997" width="18" height="14" rx="1.500" stroke={b} strokeWidth="1.800" />
        <path d="M1808 1001h12M1808 1004.500h12" stroke={b} strokeWidth="2" strokeDasharray="2 1.300" />
        <path d="M1809 1008h10" stroke={b} strokeWidth="1.600" />
        <circle cx="1843.500" cy="998" r="4.500" fill="#c8c8c8" />
        <path d="M1836 1012c0-10 15-10 15 0z" fill="#c8c8c8" />
        <path d="M1846 1003h6v8h-6z" fill="#ddd" stroke="#aaa" strokeWidth="0.800" />
        <path d="M1865 998l5-3c2 2 6 2 8 0l5 3l-2 5l-3-1v10h-8v-10l-3 1z" fill={b} />
        <path
          d="M1897 996h5.500v7H1897q-1.500 0-1.500-2v-3q0-2 1.500-2zM1906 996h4q2 0 2 2v3q0 2-2 2h-4zM1897 1005h5.500v7H1897q-1.500 0-1.500-2v-3q0-2 1.500-2zM1906 1005h4q2 0 2 2v3q0 2-2 2h-4z"
          fill={b}
        />
        <circle cx="1909" cy="999.500" r="1.500" fill="#fff" />
      </svg>
    </div>
  );
}

/* ---------- page ---------- */

export default function App() {
  return (
    <div className="relative flex h-[1080px] w-[1920px] flex-col overflow-hidden bg-[#f0f0f0] font-['Noto_Sans','Noto_Sans_CJK_SC',sans-serif]">
      <div className="flex h-[29px] shrink-0 items-center bg-white pl-[3px]">
        <WaveLogo />
        <span className="ml-[5px] flex-1 text-[15.300px] text-[#888]">Wave</span>
        <svg className="h-[14px] w-[140px]" viewBox="1760 7 140 14" fill="none" stroke="#888">
          <path d="M1766 14h11M1882.500 8.500l11 11M1893.500 8.500l-11 11" />
          <rect x="1823.500" y="10.500" width="8" height="8" rx="1.500" />
          <path d="M1826 8.500h6q2 0 2 2v6" />
        </svg>
        <div className="w-[20px]" />
      </div>
      <div className="flex h-[25px] shrink-0 items-center bg-white pb-px pl-[9px] text-[15.200px] text-[#777]">
        {[
          ["File", "w-[41px]"],
          ["Edit", "w-[45px]"],
          ["View", "w-[51px]"],
          ["Add", "w-[47px]"],
          ["Format", "w-[69px]"],
          ["Tools", "w-[58px]"],
          ["Bookmarks", "w-[101px]"],
          ["Window", "w-[76px]"],
          ["Help", "w-[40px]"],
        ].map(([t, w]) => (
          <span key={t} className={`shrink-0 ${w}`}>
            {t}
          </span>
        ))}
      </div>
      <div className="mx-[3px] flex h-[25px] shrink-0 items-center border-t-[3px] border-b border-t-[#c8c8c8] border-b-[#888] bg-[#99b4d1] pl-[1px]">
        <WaveLogo />
        <span className={`ml-[5px] w-[97px] shrink-0 ${T} text-[13.300px] tracking-[0.1px] whitespace-nowrap text-black`}>
          Wave - Default
        </span>
        <div className="ml-[2px] h-[9px] w-[851px] shrink-0 border-y-[2px] border-t-[#c0e4f4] border-b-[#222e3c] bg-[linear-gradient(180deg,#222e3c_0_2px,#99b4d1_2px_3px,#c0e4f4_3px_5px)]" />
        <div className="h-[11px] w-[26px] shrink-0 bg-[radial-gradient(#e8f4fc_1px,#5a708a_1px,#99b4d1_1.500px)] bg-[size:4px_4px]" />
        <div className="h-[9px] w-[848px] shrink-0 border-y-[2px] border-t-[#c0e4f4] border-b-[#222e3c] bg-[linear-gradient(180deg,#222e3c_0_2px,#99b4d1_2px_3px,#c0e4f4_3px_5px)]" />
        <div className="ml-[5px] flex gap-[5px]">
          {["M8 2v12M2 8h12M5 5l6 6M11 5l-6 6", "M13 3L5 11M4 5v7h7M8 4l-3 3", "M4 4l8 9M12 4l-8 9"].map((d, i) => (
            <div
              key={d}
              className="h-[16px] w-[15px] border border-t-white border-r-[#666] border-b-[#666] border-l-white bg-[#f0f0f0]"
            >
              <svg
                className="h-full w-full"
                viewBox="0 0 16 16"
                fill="none"
                stroke="#000"
                strokeWidth={i ? 2.6 : 1.2}
                strokeDasharray={i ? undefined : "1.500 1"}
              >
                <path d={d} />
              </svg>
            </div>
          ))}
        </div>
      </div>

      <div className="flex shrink-0 pl-[4px]">
        <ToolGroup
          x={4}
          end={432}
          slots={[
            ["h", 9],
            ["doc", 30.5],
            ["v", 50],
            ["open", 70],
            ["save", 98],
            ["refresh", 126],
            ["print", 153.5],
            ["|", 174.5],
            ["cut", 196],
            ["copy", 223],
            ["paste", 250],
            ["undo", 278],
            ["redo", 304],
            ["|", 326],
            ["green", 346.5],
            ["v", 364],
            ["bino", 384.5],
            ["tree", 411],
          ]}
        />
        <ToolGroup
          x={432}
          end={592}
          slots={[
            ["h", 439],
            ["compile", 463],
            ["compile2", 490],
            ["compile3", 517],
            ["sim", 544.5],
            ["brk", 572],
          ]}
        />
        <ToolGroup
          x={592}
          end={1157}
          slots={[
            ["h", 599],
            ["link", 625, "btn"],
            ["restart", 655],
            ["v", 673],
            ["up", 693.5],
            ["left", 721],
            ["right", 748.5],
            ["|", 769],
            ["run0", 790],
            ["num", 846],
            ["spin", 893],
            ["run1", 921],
            ["run2", 948.5],
            ["run3", 976],
            ["brk", 1003.5],
            ["stop", 1029],
            ["|", 1052],
            ["perfP", 1075, "btn"],
            ["perfM", 1107, "btn"],
            ["hand", 1136],
          ]}
        />
        <ToolGroup
          x={1157}
          end={1381}
          slots={[
            ["h", 1163],
            ["stepIn", 1188],
            ["stepOver", 1214.5],
            ["stepOut", 1243],
            ["|", 1263],
            ["stepIn2", 1284],
            ["v", 1301],
            ["stepOver2", 1322],
            ["v", 1340.5],
            ["stepOut2", 1361.5],
          ]}
        />
        <ToolGroup
          x={1381}
          end={1575}
          slots={[
            ["h", 1387],
            ["bmAdd", 1411],
            ["v", 1429],
            ["bmDel", 1449.5],
            ["v", 1468],
            ["bmEdit", 1488],
            ["bmSave", 1517],
            ["v", 1534.5],
            ["bmGo", 1555.5],
          ]}
        />
        <ToolGroup
          x={1575}
          end={1802}
          slots={[
            ["h", 1581],
            ["ptr", 1607, "in"],
            ["zoomSel", 1640, "btn"],
            ["pan", 1672.5, "btn"],
            ["two", 1705, "btn"],
            ["edit", 1737.5, "btn"],
            ["|", 1760],
            ["light", 1780],
          ]}
        />
      </div>
      <div className="flex h-[44px] shrink-0 border-b border-[#a0a0a0] pl-[4px]">
        <ToolGroup
          x={4}
          end={245}
          slots={[
            ["h", 9],
            ["curAdd", 32],
            ["curDel", 59.5],
            ["prevT", 87],
            ["nextT", 114.5],
            ["e1", 142.5],
            ["e2", 170],
            ["e3", 199],
            ["e4", 225],
          ]}
        />
        <ToolGroup
          x={245}
          end={704}
          slots={[
            ["h", 251.5],
            ["x1", 274],
            ["v", 293],
            ["x2", 313.5],
            ["v", 331],
            ["x3", 352.5],
            ["|", 373],
            ["Search:", 410.5],
            ["field", 513],
            ["drop", 598.5],
            ["f1", 625],
            ["f2", 650],
            ["f3", 681],
          ]}
        />
        <ToolGroup
          x={704}
          end={891}
          slots={[
            ["h", 709.5],
            ["zin", 734],
            ["zout", 761.5],
            ["zfull", 789],
            ["zcur", 817],
            ["zcur2", 844],
            ["zsel", 871],
          ]}
        />
        <ToolGroup
          x={891}
          end={1135}
          slots={[
            ["h", 897],
            ["w1", 923.5, "in"],
            ["w2", 956, "btn"],
            ["w3", 988.5, "btn"],
            ["|", 1012],
            ["w4", 1032],
            ["w5", 1060],
            ["w6", 1087],
            ["w7", 1115],
          ]}
        />
      </div>

      <div className="flex h-[830px] shrink-0">
        <div className="w-[5px] shrink-0 border-l border-l-[#a0a0a0] bg-[#f8f8f8]" />
        <NamesColumn />
        <div className="w-[4px] shrink-0 border-l border-[#c8c8c8] bg-white" />
        <ValuesColumn />
        <div className="w-[3px] shrink-0 bg-white" />
        <WaveColumn />
        <div className="w-[4px] shrink-0 border-l border-[#999] bg-white" />
        <ScrollColumn />
      </div>

      <div className={`flex h-[26px] shrink-0 border-b-2 border-[#c0c0c0] pt-px pl-[3px] ${T} text-[12.500px] text-black`}>
        <div className="flex h-[23px] w-[211px] items-center border border-t-[#a0a0a0] border-r-white border-b-white border-l-[#a0a0a0] pt-[2px] pl-[6px]">
          0 ps to 3942067500 ps
        </div>
        <div className="ml-px flex h-[23px] flex-1 items-center border border-t-[#a0a0a0] border-b-white border-l-[#a0a0a0] pt-[2px] pl-[6px] text-[13.300px] tracking-[0.3px]">
          rd_cnt
        </div>
      </div>
      <Taskbar />

      <Dialog />
      <ImeBar />
      <SLogo cls="absolute top-[982px] left-[1637px] h-[38px] w-[40px]" />
      <SLogo cls="absolute top-[1040px] left-[1688px] h-[20px] w-[20px]" />
      <div className="absolute top-[1047px] left-[1734px] text-[19px] leading-[28px] whitespace-nowrap text-[#b4b4b4] [text-shadow:1px_1px_0_#777]">
        CSDN @请叫我小黑
      </div>
      <div className="absolute top-[1029px] right-[17px] text-right text-[13.500px] leading-[21px] tracking-[-0.600px] text-[#111]">
        <div className="mr-[2px]">9:16</div>
        <div>2023/7/21</div>
      </div>
    </div>
  );
}
